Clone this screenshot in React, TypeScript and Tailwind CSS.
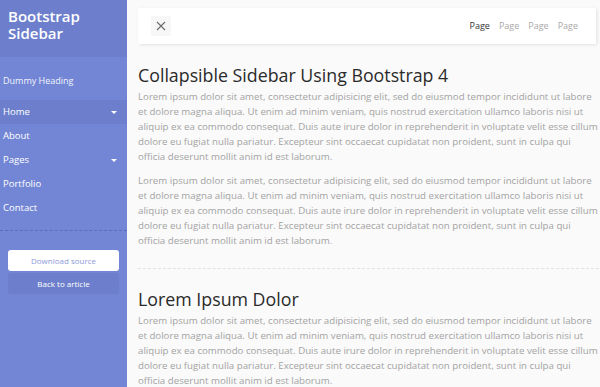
const lorem =
  "Lorem ipsum dolor sit amet, consectetur adipisicing elit, sed do eiusmod tempor incididunt ut labore et dolore magna aliqua. Ut enim ad minim veniam, quis nostrud exercitation ullamco laboris nisi ut aliquip ex ea commodo consequat. Duis aute irure dolor in reprehenderit in voluptate velit esse cillum dolore eu fugiat nulla pariatur. Excepteur sint occaecat cupidatat non proident, sunt in culpa qui officia deserunt mollit anim id est laborum.";

const Caret = () => (
  <span className="w-0 h-0 border-l-[3px] border-r-[3px] border-t-[3px] border-l-transparent border-r-transparent border-t-white" />
);

const navItems = [
  { label: "Home", active: true, caret: true },
  { label: "About" },
  { label: "Pages", caret: true },
  { label: "Portfolio" },
  { label: "Contact" },
];

const Sidebar = () => (
  <nav className="w-[127px] shrink-0 bg-[#7386d5] text-white">
    <div className="h-[57px] bg-[#6d7fcc] px-[8px] pt-[8px]">
      <h3 className="text-[15px] leading-[17px] font-semibold">
        Bootstrap
        <br />
        Sidebar
      </h3>
    </div>

    <ul className="border-b border-dashed border-[#5c6db8] pb-[10px]">
      <p className="h-[43px] pl-[3px] pt-[16px] text-[9px] leading-[15px] text-white/95">Dummy Heading</p>
      {navItems.map((item) => (
        <li
          key={item.label}
          className={`h-[24px] flex items-center justify-between pl-[3px] pr-[10px] text-[9.5px] ${
            item.active ? "bg-[#6d7fcc]" : ""
          }`}
        >
          <span>{item.label}</span>
          {item.caret && <Caret />}
        </li>
      ))}
    </ul>

    <div className="px-[8px] pt-[19px] flex flex-col gap-[2px]">
      <a className="h-[21px] flex items-center justify-center rounded-[3px] bg-white text-[8px] text-[#8d9ad8]">
        Download source
      </a>
      <a className="h-[21px] flex items-center justify-center rounded-[3px] bg-[#6d7fcc] text-[8px] text-white">
        Back to article
      </a>
    </div>
  </nav>
);

const Topbar = () => (
  <div className="h-[36px] mb-[21px] mr-[3px] bg-white shadow-[1px_1px_3px_rgba(0,0,0,0.1)] flex items-center justify-between pl-[13px] pr-[18px]">
    <button className="w-[20px] h-[20px] flex items-center justify-center rounded-[2px] bg-[#f7f7f7]">
      <svg width="10" height="10" viewBox="0 0 10 10" fill="none" stroke="#6b6b6b" strokeWidth="1.1">
        <path d="M1 1 L9 9 M9 1 L1 9" />
      </svg>
    </button>
    <div className="flex gap-[9px] text-[9px]">
      <span className="text-[#333]">Page</span>
      <span className="text-[#a8a8a8]">Page</span>
      <span className="text-[#a8a8a8]">Page</span>
      <span className="text-[#a8a8a8]">Page</span>
    </div>
  </div>
);

export default function App() {
  return (
    <div className="flex min-h-screen bg-[#fafafa] font-['Open_Sans',sans-serif]">
      <Sidebar />
      <main className="flex-1 min-w-0 pl-[11px] pr-[1px] pt-[8px]">
        <Topbar />
        <h2 className="text-[17.8px] leading-[20px] text-[#2a2a2a] mb-[4px]">Collapsible Sidebar Using Bootstrap 4</h2>
        <p className="text-[9.7px] leading-[15px] text-[#a3a3a3] mb-[9px]">{lorem}</p>
        <p className="text-[9.7px] leading-[15px] text-[#a3a3a3] mb-[9px]">{lorem}</p>

        <div className="my-[20px] border-b border-dashed border-[#e2e2e2]" />

        <h2 className="text-[17.8px] leading-[20px] text-[#2a2a2a] mb-[4px]">Lorem Ipsum Dolor</h2>
        <p className="text-[9.7px] leading-[15px] text-[#a3a3a3] mb-[9px]">{lorem}</p>
      </main>
    </div>
  );
}
